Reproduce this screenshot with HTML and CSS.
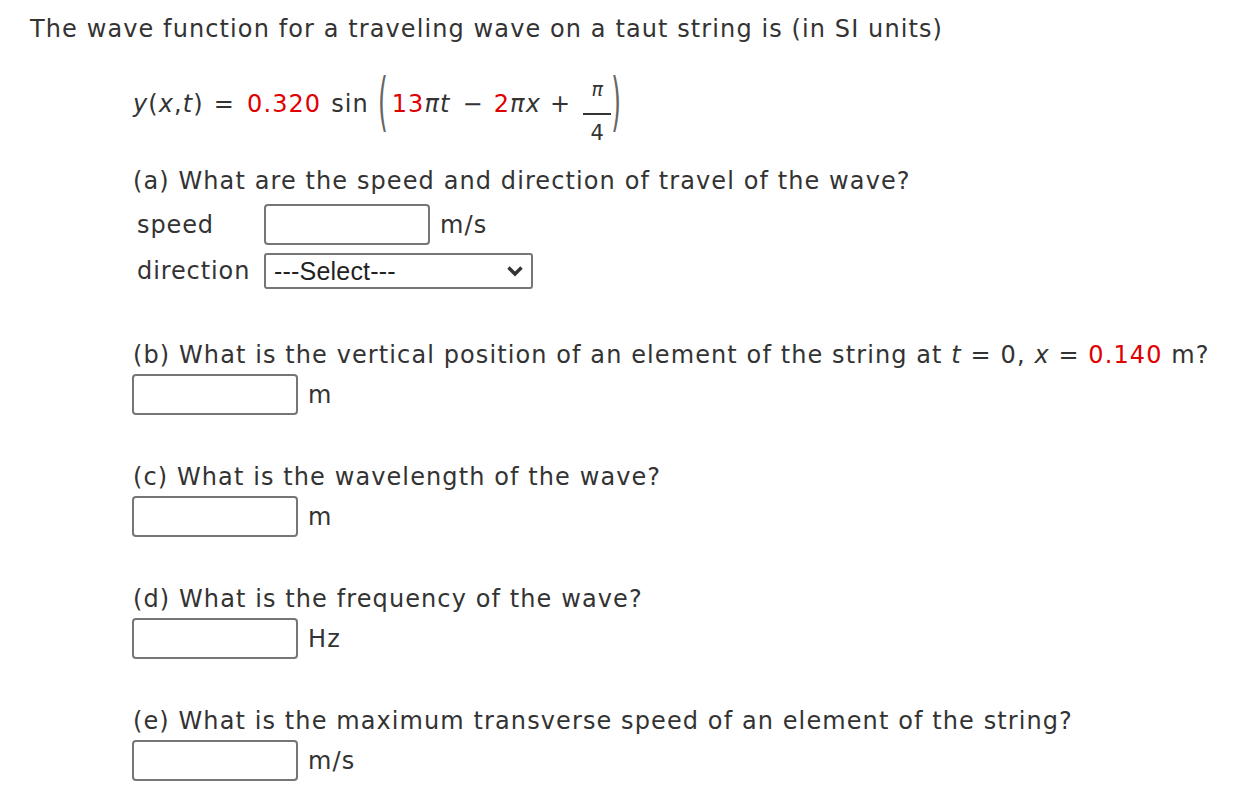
FILE: index.html
```html
<!DOCTYPE html>
<html>
<head>
<meta charset="utf-8">
<link rel="stylesheet" href="styles.css">
</head>
<body>
<div class="page">
  <p class="intro">The wave function for a traveling wave on a taut string is (in SI units)</p>
  <div class="equation">
    <span class="lhs"><span class="it">y</span>(<span class="it">x</span>,<span class="it">t</span>)</span>
    <span class="op eq">=</span>
    <span class="red amp">0.320</span>
    <span class="fn">sin</span>
    <span class="paren lp">(</span>
    <span class="red">13</span><span class="it">πt</span>
    <span class="op minus">−</span>
    <span class="red">2</span><span class="it">πx</span>
    <span class="op plus">+</span>
    <span class="frac"><span class="num it">π</span><span class="den">4</span></span>
    <span class="paren rp">)</span>
  </div>

  <div class="part part-a">
    <p class="q">(a) What are the speed and direction of travel of the wave?</p>
    <div class="grid">
      <span class="label">speed</span>
      <span class="cell"><span class="box"></span><span class="unit">m/s</span></span>
      <span class="label">direction</span>
      <span class="cell"><span class="select"><span class="sel-text">---Select---</span><svg class="chev" width="18" height="12" viewBox="0 0 18 12"><path d="M2.5 2.5 L9 9 L15.5 2.5" fill="none" stroke="#333" stroke-width="3.4"/></svg></span></span>
    </div>
  </div>

  <div class="part part-b">
    <p class="q">(b) What is the vertical position of an element of the string at <span class="it">t</span> = 0, <span class="it">x</span> = <span class="red">0.140</span> m?</p>
    <div class="answer"><span class="box"></span><span class="unit">m</span></div>
  </div>

  <div class="part part-n">
    <p class="q">(c) What is the wavelength of the wave?</p>
    <div class="answer"><span class="box"></span><span class="unit">m</span></div>
  </div>

  <div class="part part-n">
    <p class="q">(d) What is the frequency of the wave?</p>
    <div class="answer"><span class="box"></span><span class="unit">Hz</span></div>
  </div>

  <div class="part part-n">
    <p class="q">(e) What is the maximum transverse speed of an element of the string?</p>
    <div class="answer"><span class="box"></span><span class="unit">m/s</span></div>
  </div>
</div>
</body>
</html>
```

FILE: styles.css
```css
html, body {
  margin: 0;
  padding: 0;
  background: #fff;
}
body {
  font-family: "DejaVu Sans", Verdana, sans-serif;
  font-size: 24px;
  letter-spacing: 1.1px;
  color: #333;
}
.page {
  padding: 14px 0 0 30px;
}
p { margin: 0; }
.intro {
  line-height: 30px;
}
.it { font-style: italic; }
.red { color: #e00000; }

/* equation */
.equation {
  display: flex;
  align-items: center;
  height: 60px;
  margin: 30px 0 0 103px;
  line-height: 30px;
  white-space: nowrap;
}
.eq { margin: 0 12px 0 10px; }
.fn { margin: 0 9px 0 10px; }
.minus { margin: 0 10px 0 12px; }
.plus { margin: 0 12px 0 9px; }
.paren {
  display: inline-block;
  font-size: 25px;
  transform: scaleY(2.55);
  font-weight: normal;
  color: #666;
  letter-spacing: 0;
}
.lp { margin-right: 4px; }
.rp { margin-left: 0; }
.frac {
  align-self: flex-start;
  display: inline-flex;
  flex-direction: column;
  align-items: center;
  margin-top: 4px;
  width: 28px;
  letter-spacing: 0;
}
.num {
  font-size: 19px;
  line-height: 22px;
  padding-bottom: 13px;
  width: 100%;
  text-align: center;
  border-bottom: 2px solid #333;
}
.den {
  font-size: 21px;
  line-height: 24px;
  padding-top: 6px;
}

/* parts */
.part {
  margin-left: 103px;
}
.part-a { margin-top: 32px; }
.q { line-height: 30px; }
.grid {
  display: grid;
  grid-template-columns: 127px auto;
  row-gap: 8px;
  margin-top: 8px;
  margin-left: 4px;
  align-items: center;
}
.label { letter-spacing: 0.9px; }
.cell {
  display: flex;
  align-items: center;
}
.box {
  display: inline-block;
  width: 162px;
  height: 37px;
  border: 2px solid #767676;
  border-radius: 4px;
}
.unit { margin-left: 10px; }
.select {
  box-sizing: border-box;
  display: flex;
  align-items: center;
  justify-content: space-between;
  width: 269px;
  height: 36px;
  border: 2px solid #767676;
  border-radius: 3px;
  padding: 0 7px 0 8px;
  font-family: "Liberation Sans", Arial, sans-serif;
  font-size: 25px;
  letter-spacing: 0.2px;
  color: #222;
}
.sel-text { line-height: 30px; }
.part-b { margin-top: 51px; }
.answer {
  display: flex;
  align-items: center;
  margin-top: 4px;
  margin-left: -1px;
}
.part-n { margin-top: 47px; }
```
